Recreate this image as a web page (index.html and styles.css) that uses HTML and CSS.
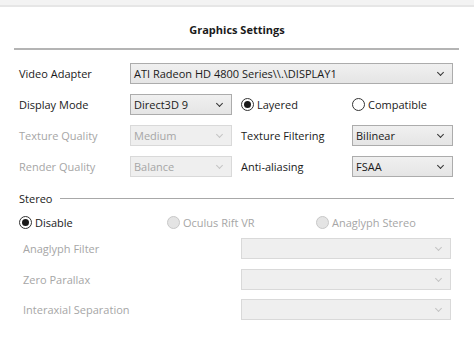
FILE: index.html
```html
<!DOCTYPE html>
<html lang="en">
<head>
    <meta charset="UTF-8">
    <meta name="viewport" content="width=device-width, initial-scale=1.0">
    <title>Graphics Settings</title>
    <link rel="stylesheet" href="styles.css">
</head>
<body>

    <div class="top-band"></div>
    <div class="title">Graphics Settings</div>
    <div class="title-line"></div>

    <div class="settings">
        <div class="label">Video Adapter</div>
        <div class="select wide">ATI Radeon HD 4800 Series\\.\DISPLAY1<span class="arrow"></span></div>

        <div class="label">Display Mode</div>
        <div class="select narrow">Direct3D 9<span class="arrow"></span></div>
        <div class="radio"><span class="dot checked"></span>Layered</div>
        <div class="radio"><span class="dot"></span>Compatible</div>

        <div class="label off">Texture Quality</div>
        <div class="select narrow off">Medium<span class="arrow"></span></div>
        <div class="label">Texture Filtering</div>
        <div class="select">Bilinear<span class="arrow"></span></div>

        <div class="label off">Render Quality</div>
        <div class="select narrow off">Balance<span class="arrow"></span></div>
        <div class="label">Anti-aliasing</div>
        <div class="select">FSAA<span class="arrow"></span></div>
    </div>

    <div class="group-head">
        <span>Stereo</span>
        <div class="group-line"></div>
    </div>

    <div class="stereo-modes">
        <div class="radio"><span class="dot checked"></span>Disable</div>
        <div class="radio off"><span class="dot"></span>Oculus Rift VR</div>
        <div class="radio off"><span class="dot"></span>Anaglyph Stereo</div>
    </div>

    <div class="stereo">
        <div class="label off">Anaglyph Filter</div>
        <div class="select off"><span class="arrow"></span></div>
        <div class="label off">Zero Parallax</div>
        <div class="select off"><span class="arrow"></span></div>
        <div class="label off">Interaxial Separation</div>
        <div class="select off"><span class="arrow"></span></div>
    </div>

</body>
</html>
```

FILE: styles.css
```css
body
{
    margin: 0;
    background: #ffffff;
    color: #1a1a1a;
    font-family: "Open Sans", "Noto Sans", sans-serif;
    font-size: 11px;
}
.top-band
{
    height: 5px;
    background: #f3f3f3;
    border-bottom: 2px solid #e6e6e6;
}
.title
{
    height: 41px;
    line-height: 46px;
    text-align: center;
    font-weight: bold;
    font-size: 11px;
}
.title-line
{
    margin: 0 15px 0 14px;
    height: 2px;
    background: #b4b4b4;
}
.settings
{
    display: grid;
    grid-template-columns: 111px 111px 111px 101px;
    row-gap: 10px;
    grid-auto-rows: 21px;
    margin: 13px 0 0 19px;
}
.label
{
    display: flex;
    align-items: center;
}
.label.off
{
    color: #a6a6a6;
}
.select
{
    position: relative;
    display: flex;
    align-items: center;
    box-sizing: border-box;
    padding-left: 3px;
    border: 1px solid #acacac;
    background: linear-gradient(#f0f0f0, #e5e5e5);
}
.select.narrow
{
    margin-right: 9px;
}
.select.wide
{
    grid-column: 2 / 5;
}
.select.off
{
    border-color: #d9d9d9;
    background: #efefef;
    color: #a6a6a6;
}
.arrow
{
    position: absolute;
    right: 9px;
    top: 6px;
    width: 4px;
    height: 4px;
    border-right: 1.5px solid #333333;
    border-bottom: 1.5px solid #333333;
    transform: rotate(45deg);
}
.select.off .arrow
{
    border-color: #c4c4c4;
}
.radio
{
    display: flex;
    align-items: center;
    gap: 3px;
}
.radio.off
{
    color: #a6a6a6;
}
.dot
{
    position: relative;
    width: 11px;
    height: 11px;
    border: 1px solid #333333;
    border-radius: 50%;
    background: #ffffff;
}
.dot.checked::after
{
    content: "";
    position: absolute;
    left: 2px;
    top: 2px;
    width: 7px;
    height: 7px;
    border-radius: 50%;
    background: #1a1a1a;
}
.radio.off .dot
{
    border-color: #c8c8c8;
    background: #e4e4e4;
}
.group-head
{
    display: flex;
    align-items: center;
    gap: 8px;
    height: 16px;
    margin: 13px 20px 0 19px;
}
.group-line
{
    flex: 1;
    height: 1px;
    background: #a8a8a8;
}
.stereo-modes
{
    display: grid;
    grid-template-columns: 148px 149px 120px;
    height: 16px;
    margin: 8px 0 0 19px;
}
.stereo
{
    display: grid;
    grid-template-columns: 218px 210px;
    row-gap: 9.5px;
    grid-auto-rows: 21px;
    margin: 8px 0 0 23px;
}
```
